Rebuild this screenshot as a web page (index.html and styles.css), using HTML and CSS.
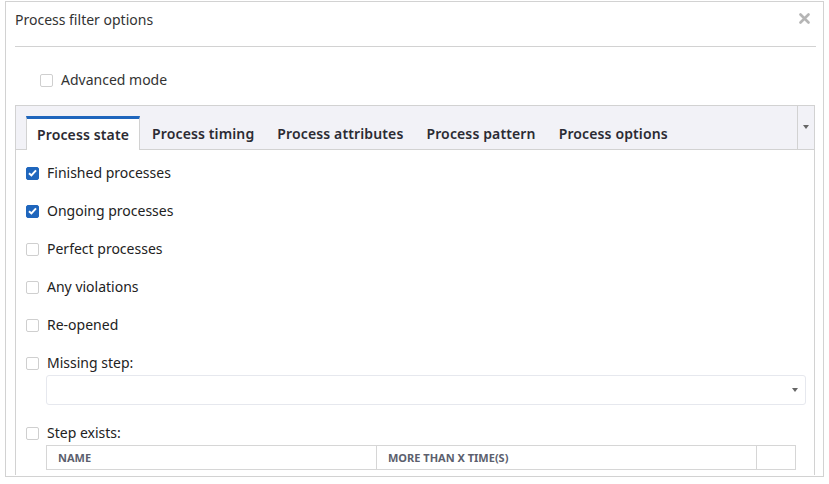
FILE: index.html
```html
<!DOCTYPE html>
<html lang="en">
<head>
<meta charset="utf-8">
<title>Process filter options</title>
<link rel="stylesheet" href="styles.css">
</head>
<body>
<div class="dialog">
  <div class="dialog-header">
    <span class="dialog-title">Process filter options</span>
    <span class="close">
      <svg width="11" height="11" viewBox="0 0 11 11"><path d="M1.5 1.5 L9.5 9.5 M9.5 1.5 L1.5 9.5" stroke="#b5b5b5" stroke-width="2.6" stroke-linecap="round"/></svg>
    </span>
  </div>
  <div class="dialog-body">
    <label class="row advanced"><span class="cb"></span><span>Advanced mode</span></label>
    <div class="panel">
      <div class="tabbar">
        <div class="tabs">
          <div class="tab active">Process state</div>
          <div class="tab">Process timing</div>
          <div class="tab">Process attributes</div>
          <div class="tab">Process pattern</div>
          <div class="tab">Process options</div>
        </div>
        <div class="tab-more"><span class="caret"></span></div>
      </div>
      <div class="panel-content">
        <label class="row"><span class="cb checked"><svg width="9" height="8" viewBox="0 0 9 8"><path d="M1 4.2 L3.4 6.4 L8 1.4" fill="none" stroke="#fff" stroke-width="2"/></svg></span><span>Finished processes</span></label>
        <label class="row"><span class="cb checked"><svg width="9" height="8" viewBox="0 0 9 8"><path d="M1 4.2 L3.4 6.4 L8 1.4" fill="none" stroke="#fff" stroke-width="2"/></svg></span><span>Ongoing processes</span></label>
        <label class="row"><span class="cb"></span><span>Perfect processes</span></label>
        <label class="row"><span class="cb"></span><span>Any violations</span></label>
        <label class="row"><span class="cb"></span><span>Re-opened</span></label>
        <label class="row tight"><span class="cb"></span><span>Missing step:</span></label>
        <div class="select"><span class="caret"></span></div>
        <label class="row step"><span class="cb"></span><span>Step exists:</span></label>
        <div class="table">
          <div class="th name">NAME</div>
          <div class="th more">MORE THAN X TIME(S)</div>
          <div class="th empty"></div>
        </div>
      </div>
    </div>
  </div>
</div>
</body>
</html>
```
FILE: styles.css
```css
* { box-sizing: border-box; }
html, body { margin: 0; padding: 0; background: #fff; }
body {
  padding: 1px 5px 0 5px;
  font-family: "Noto Sans", "Open Sans", sans-serif;
  font-size: 14px;
  color: #2b2b2b;
}
.dialog {
  width: 819px;
  height: 476px;
  border: 1px solid #d2d2d2;
  display: flex;
  flex-direction: column;
  padding-bottom: 1px;
}
.dialog-header {
  height: 45px;
  margin: 0 7px 0 9px;
  border-bottom: 1px solid #d2d2d2;
  display: flex;
  justify-content: space-between;
  align-items: flex-start;
  padding-top: 8px;
}
.dialog-title { line-height: 20px; color: #333; }
.close { padding-top: 3px; margin-right: 6px; display: flex; }
.dialog-body {
  flex: 1;
  overflow: hidden;
  padding: 21px 8px 0 9px;
}
.row {
  display: flex;
  align-items: center;
  height: 24px;
  line-height: 24px;
  margin-bottom: 14px;
  color: #222;
}
.cb {
  width: 13px;
  height: 13px;
  border: 1px solid #cfcfcf;
  border-radius: 2px;
  background: #fff;
  margin-right: 8px;
  flex: none;
  display: flex;
  align-items: center;
  justify-content: center;
}
.cb.checked { background: #1f66bd; border-color: #1f66bd; }
.advanced { padding-left: 25px; margin-bottom: 13px; color: #333; }
.panel {
  border: 1px solid #d2d2d2;
  height: 420px;
}
.tabbar {
  height: 44px;
  background: #f2f2f7;
  border-bottom: 1px solid #d2d2d2;
  display: flex;
  justify-content: space-between;
}
.tabs {
  display: flex;
  padding: 10px 0 0 10px;
}
.tab {
  height: 34px;
  padding: 1px 11px 0 12px;
  font-weight: 600;
  letter-spacing: 0.13px;
  line-height: 34px;
  color: #2b2b33;
}
.tab.active {
  background: #fff;
  border-top: 3px solid #1f66bd;
  border-left: 1px solid #d2d2d2;
  border-right: 1px solid #d2d2d2;
  line-height: 31px;
  padding: 0 10px;
  margin-bottom: -1px;
  height: 34px;
}
.tab-more {
  width: 17px;
  border-left: 1px solid #d2d2d2;
  display: flex;
  align-items: center;
  justify-content: center;
  padding-bottom: 1px;
}
.caret {
  width: 0;
  height: 0;
  border-left: 3.5px solid transparent;
  border-right: 3.5px solid transparent;
  border-top: 4px solid #666;
}
.panel-content { padding: 11px 8px 0 10px; }
.row.tight { margin-bottom: 0; }
.select {
  margin-left: 20px;
  height: 30px;
  border: 1px solid #e6e8ee;
  border-radius: 3px;
  display: flex;
  justify-content: flex-end;
  align-items: center;
  padding-right: 7px;
  margin-bottom: 16px;
}
.row.step { margin-bottom: 0; }
.table {
  margin-left: 20px;
  margin-right: 10px;
  height: 25px;
  border: 1px solid #d6d6d6;
  display: grid;
  grid-template-columns: 329px 380px 1fr;
}
.th {
  font-size: 11px;
  font-weight: 700;
  color: #5c5f6e;
  line-height: 23px;
  padding-left: 11px;
}
.th.more, .th.empty { border-left: 1px solid #d6d6d6; }
```
